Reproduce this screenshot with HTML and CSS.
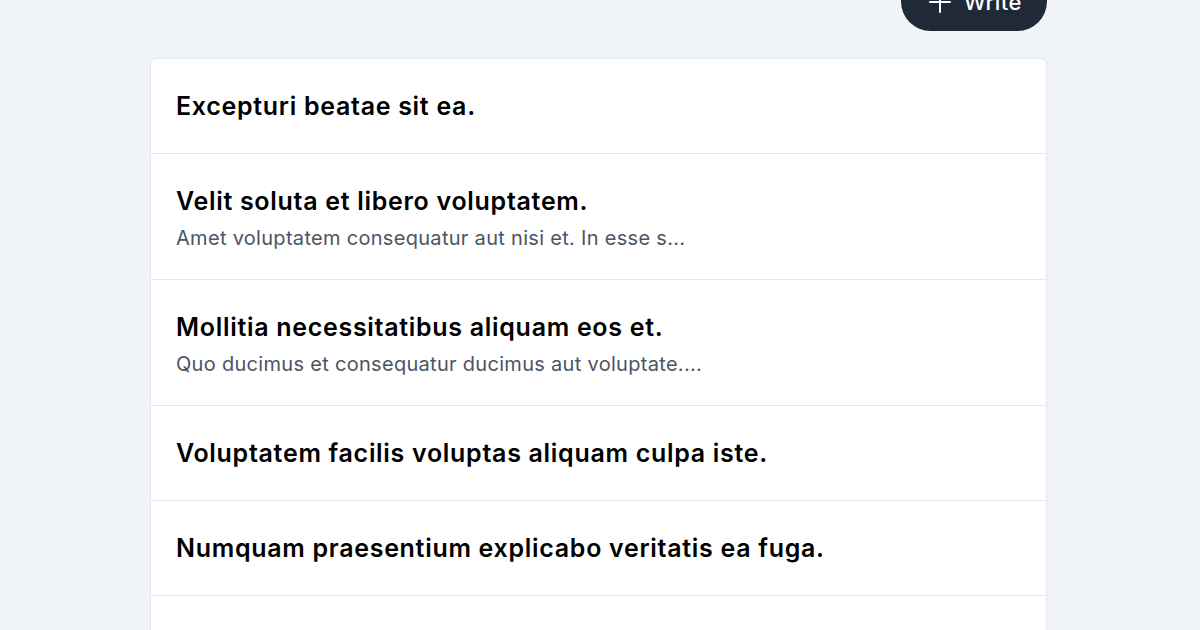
FILE: index.html
```html
<!DOCTYPE html>
<html lang="en">
<head>
<meta charset="utf-8">
<title>Posts</title>
<link rel="stylesheet" href="styles.css">
</head>
<body>
<main class="page">
  <div class="toolbar">
    <button class="write-btn" type="button">
      <svg class="plus" width="22" height="22" viewBox="0 0 22 22" fill="none" stroke="currentColor" stroke-width="2" stroke-linecap="round"><path d="M11 1v20M1 11h20"/></svg>
      <span>Write</span>
    </button>
  </div>
  <ul class="post-list">
    <li class="post"><h2 class="post-title">Excepturi beatae sit ea.</h2></li>
    <li class="post"><h2 class="post-title">Velit soluta et libero voluptatem.</h2><p class="post-excerpt">Amet voluptatem consequatur aut nisi et. In esse s...</p></li>
    <li class="post"><h2 class="post-title">Mollitia necessitatibus aliquam eos et.</h2><p class="post-excerpt">Quo ducimus et consequatur ducimus aut voluptate....</p></li>
    <li class="post"><h2 class="post-title">Voluptatem facilis voluptas aliquam culpa iste.</h2></li>
    <li class="post"><h2 class="post-title">Numquam praesentium explicabo veritatis ea fuga.</h2></li>
    <li class="post"><h2 class="post-title">Dolorem qui ut aut.</h2></li>
  </ul>
</main>
</body>
</html>
```
FILE: styles.css
```css
* { box-sizing: border-box; }
html, body { margin: 0; padding: 0; }
body {
  background: #f0f3f8;
  font-family: Inter, "Noto Sans", sans-serif;
  color: #000;
  height: 630px;
  overflow: hidden;
}
.page {
  margin: 0 153px 0 150px;
}
.toolbar {
  display: flex;
  justify-content: flex-end;
  margin-top: -28px;
  margin-bottom: 27px;
}
.write-btn {
  display: flex;
  align-items: center;
  gap: 13px;
  height: 59px;
  padding: 0 25px 0 28px;
  border: none;
  border-radius: 30px;
  background: #1f2937;
  color: #fff;
  font-family: inherit;
  font-size: 22px;
  font-weight: 500;
  letter-spacing: 0.5px;
}
.plus { display: block; }
.post-list {
  list-style: none;
  margin: 0;
  padding: 0;
  background: #fff;
  border: 1px solid #e5e7eb;
  border-radius: 6px;
}
.post {
  padding: 31px 24px 31px 25px;
  border-bottom: 1px solid #e5e7eb;
}
.post-title {
  margin: 0;
  font-size: 25px;
  line-height: 32px;
  font-weight: 600;
  letter-spacing: 0.7px;
  color: #000;
}
.post-excerpt {
  margin: 11px 0 0;
  font-size: 20px;
  line-height: 20px;
  letter-spacing: 0.3px;
  color: #4b5563;
}
```
